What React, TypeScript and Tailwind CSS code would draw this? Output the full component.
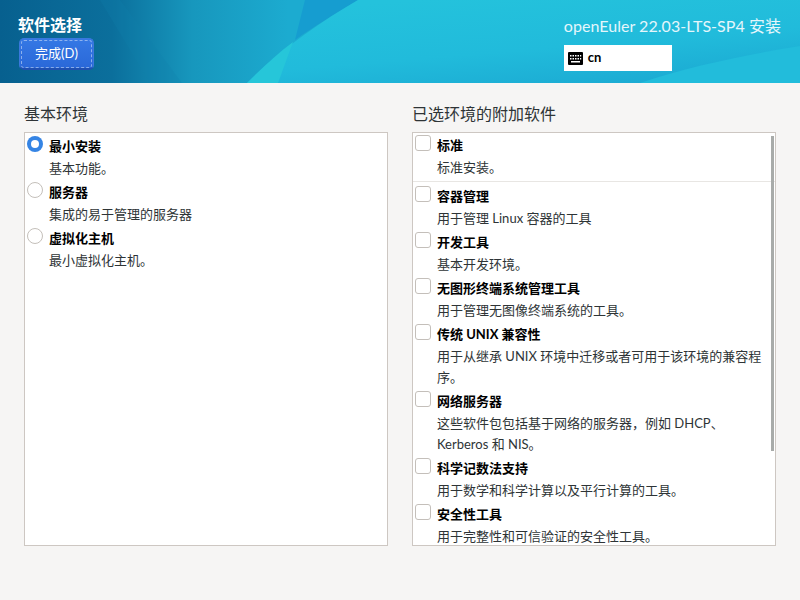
import { ReactNode } from 'react';

const envs = [
    { name: '最小安装', desc: '基本功能。', checked: true },
    { name: '服务器', desc: '集成的易于管理的服务器', checked: false },
    { name: '虚拟化主机', desc: '最小虚拟化主机。', checked: false },
];

const addons = [
    { name: '容器管理', desc: ['用于管理 Linux 容器的工具'] },
    { name: '开发工具', desc: ['基本开发环境。'] },
    { name: '无图形终端系统管理工具', desc: ['用于管理无图像终端系统的工具。'] },
    { name: '传统 UNIX 兼容性', desc: ['用于从继承 UNIX 环境中迁移或者可用于该环境的兼容程', '序。'] },
    { name: '网络服务器', desc: ['这些软件包包括基于网络的服务器，例如 DHCP、', 'Kerberos 和 NIS。'] },
    { name: '科学记数法支持', desc: ['用于数学和科学计算以及平行计算的工具。'] },
    { name: '安全性工具', desc: ['用于完整性和可信验证的安全性工具。'] },
];

const Radio = ({ checked }: { checked: boolean }) =>
    checked ? (
        <span className="w-4 h-4 rounded-full bg-[#3584e4] flex items-center justify-center">
            <span className="w-[8px] h-[8px] rounded-full bg-white" />
        </span>
    ) : (
        <span className="block w-4 h-4 rounded-full border border-[#c4bfba] bg-white" />
    );

const Checkbox = () => <span className="block w-4 h-4 rounded-[3px] border border-[#c4bfba] bg-white" />;

const Row = ({ control, name, children }: { control: ReactNode; name: string; children: ReactNode }) => (
    <div className="flex">
        <div className="w-[22px] shrink-0 pt-[1px]">{control}</div>
        <div className="min-w-0">
            <div className="text-[13px] leading-[23px] font-bold text-black">{name}</div>
            {children}
        </div>
    </div>
);

const App = () => {
    return (
        <div className="w-[800px] h-[600px] overflow-hidden bg-[#f6f5f4] font-['Lato','Noto_Sans_CJK_SC',sans-serif] text-[#2e3436]">
            <header className="relative h-[83px] overflow-hidden text-white">
                <svg className="absolute inset-0" width="800" height="83" viewBox="0 0 800 83">
                    <defs>
                        <linearGradient id="base" x1="0" y1="0" x2="1" y2="0">
                            <stop offset="0" stopColor="#07608f" />
                            <stop offset="0.14" stopColor="#0b6f9c" />
                            <stop offset="0.24" stopColor="#1797bd" />
                            <stop offset="0.36" stopColor="#1cabd0" />
                            <stop offset="1" stopColor="#1cabd0" />
                        </linearGradient>
                        <linearGradient id="cyan" x1="0.3" y1="0" x2="0.85" y2="1">
                            <stop offset="0" stopColor="#24c2dc" />
                            <stop offset="0.55" stopColor="#21bbdb" />
                            <stop offset="1" stopColor="#1ba9d2" />
                        </linearGradient>
                    </defs>
                    <rect width="800" height="83" fill="url(#base)" />
                    <path d="M120 0 L182 83 H150 L100 0 Z" fill="#0f81ab" opacity="0.25" />
                    <path d="M305 0 H358 C335 14 313 27 295 40 Z" fill="#169dd0" />
                    <path d="M358 0 C320 22 280 50 247 83 H800 V0 Z" fill="url(#cyan)" />
                    <path d="M293 42 C277 54 262 68 247 83 H278 Z" fill="#26c6d9" />
                    <path d="M640 83 C690 66 750 54 800 46 V83 Z" fill="#22bcdb" />
                </svg>
                <div className="relative flex justify-between h-full pl-[18px] pr-[19px]">
                    <div className="pt-[14px]">
                        <h1 className="text-[16px] leading-[22px] font-bold">软件选择</h1>
                        <button className="mt-[2px] ml-[1px] w-[75px] h-[32px] rounded-[5px] border border-[#3a78dc] border-b-2 border-b-[#1f4fb0] bg-gradient-to-b from-[#3578e5] to-[#2a68d8] text-[13px] text-white flex items-center justify-center outline-1 outline-dashed outline-[#ffffff70] -outline-offset-3">
                            完成(D)
                        </button>
                    </div>
                    <div className="pt-[15px] flex flex-col items-start">
                        <div className="text-[16px] leading-[21px] tracking-[0.04px] text-[#e4f6fb] whitespace-nowrap">openEuler 22.03-LTS-SP4 安装</div>
                        <div className="mt-[9px] w-[108px] h-[26px] bg-white flex items-center pl-[4px] gap-[5px] text-black">
                            <svg width="15" height="13" viewBox="0 0 15 13">
                                <rect x="0" y="0" width="15" height="13" rx="1" fill="#000" />
                                <path d="M2 3h1.5v1.5H2zM4.5 3H6v1.5H4.5zM7 3h1.5v1.5H7zM9.5 3H11v1.5H9.5zM12 3h1.2v1.5H12zM2 6h1.5v1.5H2zM4.5 6H6v1.5H4.5zM7 6h1.5v1.5H7zM9.5 6H11v1.5H9.5zM12 6h1.2v1.5H12zM3 9h9v1.5H3z" fill="#fff" />
                            </svg>
                            <span className="text-[13px] font-bold">cn</span>
                        </div>
                    </div>
                </div>
            </header>

            <main className="flex gap-[24px] px-[24px] pt-[19px]">
                <section className="w-[364px]">
                    <h2 className="text-[16px] leading-[24px] mb-[6px]">基本环境</h2>
                    <div className="h-[414px] border border-[#cdc7c2] bg-white pl-[2px] pt-[2px] overflow-hidden">
                        <div className="flex flex-col gap-[2px]">
                            {envs.map(env => (
                                <Row key={env.name} name={env.name} control={<Radio checked={env.checked} />}>
                                    <div className="text-[13px] leading-[21px]">{env.desc}</div>
                                </Row>
                            ))}
                        </div>
                    </div>
                </section>

                <section className="w-[364px]">
                    <h2 className="text-[16px] leading-[24px] mb-[6px]">已选环境的附加软件</h2>
                    <div className="relative h-[414px] border border-[#cdc7c2] bg-white overflow-hidden">
                        <div className="pl-[2px] pt-[1px] pr-[15px] pb-[3px]">
                            <Row name="标准" control={<Checkbox />}>
                                <div className="text-[13px] leading-[21px]">标准安装。</div>
                            </Row>
                        </div>
                        <div className="h-px bg-[#e8e6e3]" />
                        <div className="flex flex-col gap-[2px] pl-[2px] pt-[3px] pr-[15px]">
                            {addons.map(addon => (
                                <Row key={addon.name} name={addon.name} control={<Checkbox />}>
                                    {addon.desc.map(line => (
                                        <div key={line} className="text-[13px] leading-[21px] whitespace-nowrap">{line}</div>
                                    ))}
                                </Row>
                            ))}
                        </div>
                        {/* scrollbar */}
                        <div className="absolute right-[1px] top-[3px] w-[3px] h-[315px] bg-[#a8aba9]" />
                    </div>
                </section>
            </main>
        </div>
    );
};

export default App;
